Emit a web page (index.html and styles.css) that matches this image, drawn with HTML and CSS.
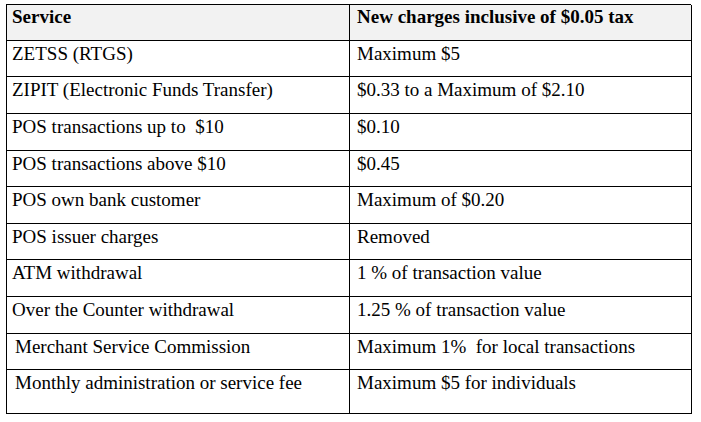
FILE: index.html
```html
<!DOCTYPE html>
<html>
<head>
<meta charset="utf-8">
<link rel="stylesheet" href="styles.css">
</head>
<body>
<div class="sheet">
  <div class="grid">
    <div class="cell head r0">Service</div>
    <div class="cell head right r0">New charges inclusive of $0.05 tax</div>
    <div class="cell r1">ZETSS (RTGS)</div>
    <div class="cell right r1">Maximum $5</div>
    <div class="cell r2">ZIPIT (Electronic Funds Transfer)</div>
    <div class="cell right r2">$0.33 to a Maximum of $2.10</div>
    <div class="cell r3">POS transactions up to &nbsp;$10</div>
    <div class="cell right r3">$0.10</div>
    <div class="cell r4">POS transactions above $10</div>
    <div class="cell right r4">$0.45</div>
    <div class="cell r5">POS own bank customer</div>
    <div class="cell right r5">Maximum of $0.20</div>
    <div class="cell r6">POS issuer charges</div>
    <div class="cell right r6">Removed</div>
    <div class="cell r7">ATM withdrawal</div>
    <div class="cell right r7">1 % of transaction value</div>
    <div class="cell r8">Over the Counter withdrawal</div>
    <div class="cell right r8">1.25 % of transaction value</div>
    <div class="cell r9 indent">Merchant Service Commission</div>
    <div class="cell right r9">Maximum 1% &nbsp;for local transactions</div>
    <div class="cell r10 indent">Monthly administration or service fee</div>
    <div class="cell right r10">Maximum $5 for individuals</div>
  </div>
</div>
</body>
</html>
```

FILE: styles.css
```css
html, body {
  margin: 0;
  padding: 0;
  background: #ffffff;
}
.sheet {
  padding: 4px 0 0 6px;
}
.grid {
  display: grid;
  grid-template-columns: 343px 342px;
  grid-template-rows: 36px 36px 37px 37px 36px 37px 36px 37px 37px 36px 44px;
  border-top: 1px solid #000;
  border-left: 1px solid #000;
  width: 685px;
  box-sizing: border-box;
  font-family: "Liberation Serif", "Times New Roman", serif;
  font-size: 19px;
  color: #000;
}
.cell {
  border-right: 1px solid #000;
  border-bottom: 1px solid #000;
  padding: 2px 0 0 5px;
  line-height: 21px;
  white-space: pre;
}
.right {
  padding-left: 7px;
}
.head {
  background: #f2f2f2;
  font-weight: bold;
  padding-top: 1px;
}
.indent {
  padding-left: 8px;
}
```
